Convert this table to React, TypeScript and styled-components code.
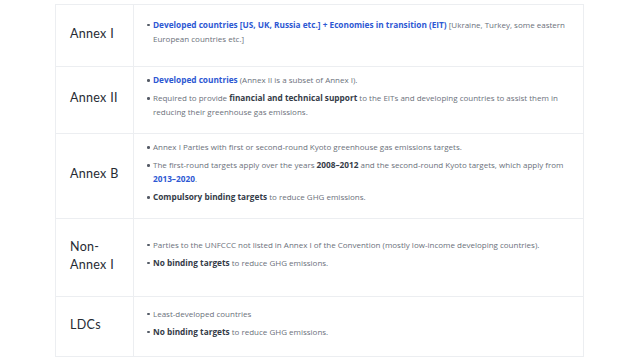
import React from "react";
import styled, { createGlobalStyle } from "styled-components";

const Global = createGlobalStyle`
  html, body { margin: 0; padding: 0; background: #ffffff; }
  body { font-family: "Open Sans", "Noto Sans", sans-serif; }
`;

const Page = styled.div`
  padding: 4px 55px 0 55px;
`;

const Table = styled.table`
  width: 529px;
  border-collapse: collapse;
  table-layout: fixed;
`;

const Row = styled.tr<{ $h: number }>`
  height: ${(p) => p.$h}px;
`;

const Label = styled.td`
  width: 50px;
  border: 1px solid #eceef1;
  padding: 0 13px 4px 14px;
  vertical-align: middle;
  font-family: Lato, "Noto Sans", sans-serif;
  font-size: 12.5px;
  line-height: 18px;
  color: #262b33;
  letter-spacing: 0.3px;
`;

const Cell = styled.td`
  border: 1px solid #eceef1;
  padding: 0 12px 8px 13px;
  vertical-align: middle;
`;

const List = styled.ul`
  margin: 0;
  padding: 0 0 0 6px;
  list-style: none;
  display: flex;
  flex-direction: column;
  gap: 4px;
`;

const Item = styled.li`
  position: relative;
  font-size: 8px;
  line-height: 14px;
  color: #6b717b;
  &::before {
    content: "";
    position: absolute;
    left: -6px;
    top: 6px;
    width: 2.6px;
    height: 2.6px;
    border-radius: 50%;
    background: #555b66;
  }
`;

const Blue = styled.strong`
  color: #2d58d3;
  font-weight: 700;
  font-size: 8.25px;
`;

const Bold = styled.strong`
  color: #343b47;
  font-weight: 700;
  font-size: 8.25px;
`;

export default function App() {
  return (
    <>
      <Global />
      <Page>
        <Table>
          <tbody>
            <Row $h={62}>
              <Label>Annex I</Label>
              <Cell>
                <List>
                  <Item>
                    <Blue>Developed countries [US, UK, Russia etc.] + Economies in transition (EIT)</Blue> [Ukraine, Turkey, some eastern European countries etc.]
                  </Item>
                </List>
              </Cell>
            </Row>
            <Row $h={67}>
              <Label>Annex II</Label>
              <Cell>
                <List>
                  <Item>
                    <Blue>Developed countries</Blue> (Annex II is a subset of Annex I).
                  </Item>
                  <Item>
                    Required to provide <Bold>financial and technical support</Bold> to the EITs and developing countries to assist them in reducing their greenhouse gas emissions.
                  </Item>
                </List>
              </Cell>
            </Row>
            <Row $h={85}>
              <Label>Annex B</Label>
              <Cell>
                <List>
                  <Item>Annex I Parties with first or second-round Kyoto greenhouse gas emissions targets.</Item>
                  <Item>
                    The first-round targets apply over the years <Bold>2008–2012</Bold> and the second-round Kyoto targets, which apply from <Blue>2013–2020</Blue>.
                  </Item>
                  <Item>
                    <Bold>Compulsory binding targets</Bold> to reduce GHG emissions.
                  </Item>
                </List>
              </Cell>
            </Row>
            <Row $h={78}>
              <Label>Non-Annex I</Label>
              <Cell>
                <List>
                  <Item>Parties to the UNFCCC not listed in Annex I of the Convention (mostly low-income developing countries).</Item>
                  <Item>
                    <Bold>No binding targets</Bold> to reduce GHG emissions.
                  </Item>
                </List>
              </Cell>
            </Row>
            <Row $h={60}>
              <Label>LDCs</Label>
              <Cell>
                <List>
                  <Item>Least-developed countries</Item>
                  <Item>
                    <Bold>No binding targets</Bold> to reduce GHG emissions.
                  </Item>
                </List>
              </Cell>
            </Row>
          </tbody>
        </Table>
      </Page>
    </>
  );
}
